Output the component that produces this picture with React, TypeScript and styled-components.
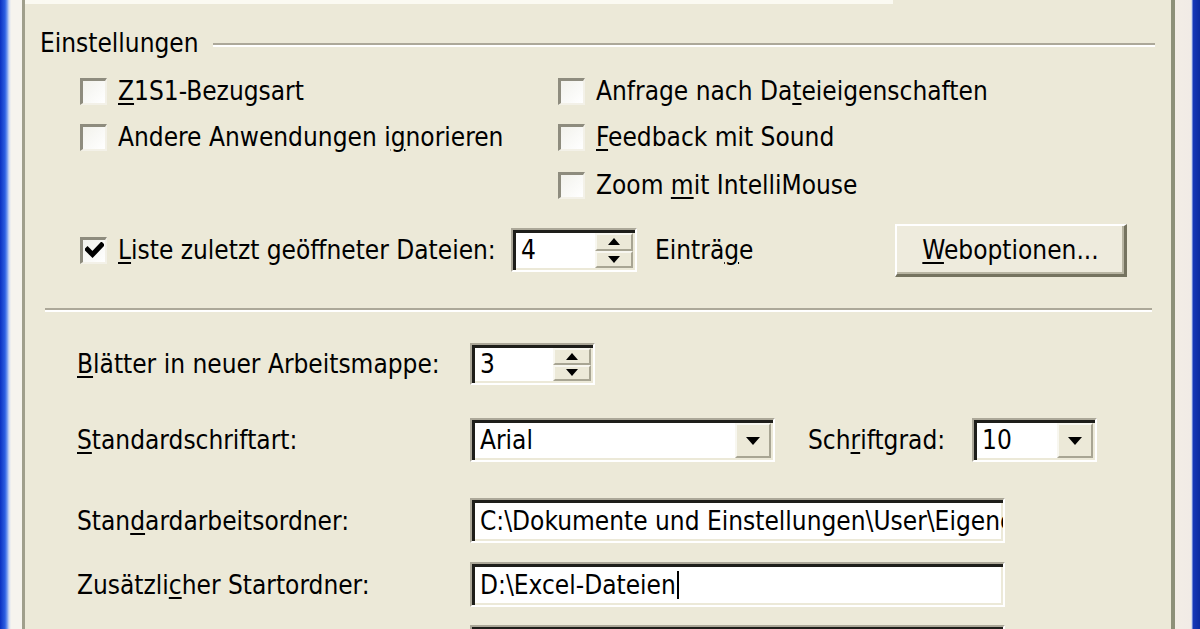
import React from "react";
import styled, { createGlobalStyle } from "styled-components";

const Global = createGlobalStyle`
  html, body { margin: 0; padding: 0; background: #ece9d8; }
  body {
    font-family: "DejaVu Sans Condensed", "DejaVu Sans", Tahoma, sans-serif;
    font-size: 26px;
    color: #000;
  }
`;

const Window = styled.div`
  display: flex;
  width: 1200px;
  height: 629px;
  overflow: hidden;
`;

const LeftFrame = styled.div`
  width: 22px;
  flex-shrink: 0;
  background: linear-gradient(
    to right,
    #0a2fc0 0px,
    #2d5fe2 5px,
    #6f96ee 7px,
    #cfdaf2 9px,
    #f6f4ee 11px,
    #f6f4ee 22px
  );
`;

const RightFrame = styled.div`
  width: 25px;
  flex-shrink: 0;
  background: linear-gradient(
    to right,
    #f3ede6 0px,
    #f1ebe6 16px,
    #b8c8f0 17px,
    #1638b8 18px,
    #0b2aa0 25px
  );
`;

const Panel = styled.div`
  flex: 1;
  display: flex;
  flex-direction: column;
  background: #ece9d8;
  border-left: 3px solid #a09f8c;
  border-right: 4px solid #8e9079;
`;

const TopStrip = styled.div`
  width: 868px;
  height: 4px;
  background: #fbfaf2;
  flex-shrink: 0;
`;

const GroupHeader = styled.div`
  display: flex;
  align-items: center;
  height: 30px;
  margin-top: 24px;
  padding-left: 15px;
  padding-right: 16px;
`;

const Etched = styled.div`
  border-top: 2px solid #aca899;
  border-bottom: 2px solid #ffffff;
  height: 0;
`;

const HeaderLine = styled(Etched)`
  flex: 1;
  margin-left: 14px;
  margin-top: 4px;
`;

const Separator = styled(Etched)`
  margin: 36px 19px 0 20px;
`;

const CheckGrid = styled.div`
  display: grid;
  grid-template-columns: 478px 1fr;
  grid-template-rows: 46px 46px 50px;
  margin-top: 10px;
  padding-left: 55px;
`;

const CheckItem = styled.label<{ $width?: number }>`
  display: flex;
  align-items: center;
  gap: 11px;
  white-space: nowrap;
  ${(p) => (p.$width ? `width: ${p.$width}px; flex-shrink: 0;` : "")}
`;

const Box = styled.span`
  width: 27px;
  height: 27px;
  box-sizing: border-box;
  flex-shrink: 0;
  display: flex;
  align-items: center;
  justify-content: center;
  background: linear-gradient(135deg, #f2f2ec, #ffffff);
  border-top: 3px solid #8e8c7e;
  border-left: 3px solid #8e8c7e;
  border-bottom: 2px solid #f3f1e8;
  border-right: 2px solid #f3f1e8;
`;

const U = styled.span`
  text-decoration: underline;
  text-underline-offset: 3px;
  text-decoration-thickness: 2px;
`;

const ListRow = styled.div`
  display: flex;
  align-items: center;
  height: 44px;
  margin-top: 18px;
  padding-left: 55px;
  padding-right: 44px;
`;

const Sunken = styled.div<{ $w: number; $h: number }>`
  width: ${(p) => p.$w}px;
  height: ${(p) => p.$h}px;
  box-sizing: border-box;
  flex-shrink: 0;
  display: flex;
  background: #ffffff;
  border-top: 2px solid #aca899;
  border-left: 2px solid #aca899;
  border-bottom: 2px solid #ffffff;
  border-right: 2px solid #ffffff;
  box-shadow: inset 3px 3px 0 0 #1e1e1a, inset -2px -2px 0 0 #ece9d8;
  overflow: hidden;
`;

const FieldText = styled.div`
  flex: 1;
  display: flex;
  align-items: center;
  padding-left: 8px;
  white-space: nowrap;
  overflow: hidden;
  min-width: 0;
`;

const SpinCol = styled.div`
  width: 40px;
  display: flex;
  flex-direction: column;
  padding: 3px 2px 2px 0;
  box-sizing: border-box;
`;

const RaisedBtn = styled.div`
  flex: 1;
  display: flex;
  align-items: center;
  justify-content: center;
  background: #ece9d8;
  box-sizing: border-box;
  border-top: 2px solid #f8f7f0;
  border-left: 2px solid #f8f7f0;
  border-bottom: 2px solid #a8a593;
  border-right: 2px solid #a8a593;
`;

const DropBtn = styled(RaisedBtn)`
  flex: none;
  width: 36px;
  margin: 3px 2px 2px 0;
`;

const Unit = styled.span`
  margin-left: 18px;
`;

const PushButton = styled.div`
  margin-left: auto;
  width: 232px;
  height: 53px;
  box-sizing: border-box;
  display: flex;
  align-items: center;
  justify-content: center;
  background: #eeebdd;
  border-top: 2px solid #ffffff;
  border-left: 2px solid #ffffff;
  border-bottom: 3px solid #75735f;
  border-right: 3px solid #75735f;
  box-shadow: inset -2px -2px 0 0 #b8b5a2;
  white-space: nowrap;
`;

const FormRow = styled.div<{ $top: number; $h: number }>`
  display: flex;
  align-items: center;
  height: ${(p) => p.$h}px;
  margin-top: ${(p) => p.$top}px;
  padding-left: 52px;
  flex-shrink: 0;
`;

const FormLabel = styled.span<{ $w: number; $ml?: number }>`
  width: ${(p) => p.$w}px;
  margin-left: ${(p) => p.$ml ?? 0}px;
  flex-shrink: 0;
  white-space: nowrap;
`;

const Caret = styled.span`
  display: inline-block;
  width: 2px;
  height: 28px;
  background: #000;
  margin-left: 1px;
`;

const UpArrow = () => (
  <svg width="12" height="7" viewBox="0 0 12 7">
    <polygon points="6,0 12,7 0,7" fill="#000" />
  </svg>
);
const DownArrow = ({ w = 12, h = 7 }: { w?: number; h?: number }) => (
  <svg width={w} height={h} viewBox={`0 0 ${w} ${h}`}>
    <polygon points={`0,0 ${w},0 ${w / 2},${h}`} fill="#000" />
  </svg>
);

const Check = () => (
  <svg width="19" height="17" viewBox="0 0 19 17">
    <polyline
      points="2.5,7.5 7.5,12.5 16.5,3"
      fill="none"
      stroke="#000"
      strokeWidth="5"
      strokeLinecap="square"
    />
  </svg>
);

const Spin = ({ w, h, value }: { w: number; h: number; value: string }) => (
  <Sunken $w={w} $h={h}>
    <FieldText>{value}</FieldText>
    <SpinCol>
      <RaisedBtn>
        <UpArrow />
      </RaisedBtn>
      <RaisedBtn>
        <DownArrow />
      </RaisedBtn>
    </SpinCol>
  </Sunken>
);

const Combo = ({ w, value }: { w: number; value: string }) => (
  <Sunken $w={w} $h={44}>
    <FieldText>{value}</FieldText>
    <DropBtn>
      <DownArrow w={14} h={8} />
    </DropBtn>
  </Sunken>
);

export default function App() {
  return (
    <>
      <Global />
      <Window>
        <LeftFrame />
        <Panel>
          <TopStrip />
          <GroupHeader>
            <span>Einstellungen</span>
            <HeaderLine />
          </GroupHeader>
          <CheckGrid>
            <CheckItem>
              <Box />
              <span>
                <U>Z</U>1S1-Bezugsart
              </span>
            </CheckItem>
            <CheckItem>
              <Box />
              <span>
                Anfrage nach Da<U>t</U>eieigenschaften
              </span>
            </CheckItem>
            <CheckItem>
              <Box />
              <span>
                Andere Anwendungen i<U>g</U>norieren
              </span>
            </CheckItem>
            <CheckItem>
              <Box />
              <span>
                <U>F</U>eedback mit Sound
              </span>
            </CheckItem>
            <div />
            <CheckItem>
              <Box />
              <span>
                Zoom <U>m</U>it IntelliMouse
              </span>
            </CheckItem>
          </CheckGrid>
          <ListRow>
            <CheckItem $width={431}>
              <Box>
                <Check />
              </Box>
              <span>
                <U>L</U>iste zuletzt geöffneter Dateien:
              </span>
            </CheckItem>
            <Spin w={126} h={44} value="4" />
            <Unit>
              Einträ<U>g</U>e
            </Unit>
            <PushButton>
              <span>
                <U>W</U>eboptionen...
              </span>
            </PushButton>
          </ListRow>
          <Separator />
          <FormRow $top={31} $h={42}>
            <FormLabel $w={393}>
              <U>B</U>lätter in neuer Arbeitsmappe:
            </FormLabel>
            <Spin w={125} h={42} value="3" />
          </FormRow>
          <FormRow $top={33} $h={44}>
            <FormLabel $w={393}>
              <U>S</U>tandardschriftart:
            </FormLabel>
            <Combo w={305} value="Arial" />
            <FormLabel $w={164} $ml={33}>
              Sch<U>r</U>iftgrad:
            </FormLabel>
            <Combo w={125} value="10" />
          </FormRow>
          <FormRow $top={36} $h={45}>
            <FormLabel $w={393}>
              Stan<U>d</U>ardarbeitsordner:
            </FormLabel>
            <Sunken $w={535} $h={45}>
              <FieldText>C:\Dokumente und Einstellungen\User\Eigene Dateien</FieldText>
            </Sunken>
          </FormRow>
          <FormRow $top={19} $h={45}>
            <FormLabel $w={393}>
              Zusätzli<U>c</U>her Startordner:
            </FormLabel>
            <Sunken $w={535} $h={45}>
              <FieldText>
                D:\Excel-Dateien
                <Caret />
              </FieldText>
            </Sunken>
          </FormRow>
          <FormRow $top={18} $h={45}>
            <FormLabel $w={393} />
            <Sunken $w={535} $h={45} />
          </FormRow>
        </Panel>
        <RightFrame />
      </Window>
    </>
  );
}
